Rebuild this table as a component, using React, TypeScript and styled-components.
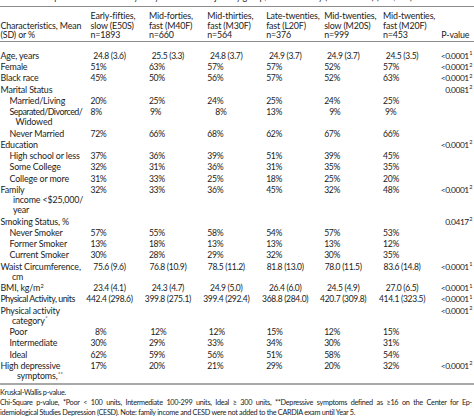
import React from "react";
import styled, { createGlobalStyle } from "styled-components";

const Global = createGlobalStyle`
  html, body { margin: 0; padding: 0; background: #fff; }
  body { overflow: hidden; }
`;

const COLS = "90.5px 58.4px 58.4px 58.9px 58px 58.9px 58.3px minmax(0, 1fr)";

const Page = styled.div`
  width: 474px;
  height: 416px;
  overflow: hidden;
  font-family: Lato, "Open Sans", sans-serif;
  font-size: 8.9px;
  letter-spacing: -0.15px;
  color: #222;
`;

const Title = styled.div`
  margin-top: -8.5px;
  padding: 0 0 4.5px 0;
  line-height: 10px;
  white-space: nowrap;
`;

const HeadRow = styled.div`
  display: grid;
  grid-template-columns: ${COLS};
  align-items: end;
  padding: 4px 0 1px;
  border-top: 1px solid #8c8c8c;
  border-bottom: 1px solid #8c8c8c;
  line-height: 9.7px;
`;

const HeadCell = styled.div<{ $pad?: number }>`
  padding-left: ${(p) => p.$pad ?? 0}px;
  white-space: nowrap;
`;

const Body = styled.div`
  padding: 8.4px 0 1.5px;
  border-bottom: 2px solid #a8a8a8;
`;

const Row = styled.div`
  display: grid;
  grid-template-columns: ${COLS};
  align-items: start;
  padding: 0.48px 0;
  line-height: 10.3px;
`;

const Label = styled.div`
  white-space: nowrap;
`;

const Line = styled.span<{ $indent: number; $tight?: boolean }>`
  display: block;
  padding-left: ${(p) => p.$indent}px;
  letter-spacing: ${(p) => (p.$tight ? "-0.5px" : "inherit")};
`;

const Pct = styled.div<{ $shift: number }>`
  padding-left: ${(p) => p.$shift}px;
  white-space: nowrap;
  font-size: 8.6px;
  letter-spacing: -0.3px;
`;

const Mean = styled.div`
  width: 38px;
  display: flex;
  justify-content: center;
  white-space: nowrap;
  font-size: 8.5px;
  letter-spacing: -0.3px;
`;

const PCell = styled.div`
  display: flex;
  justify-content: flex-end;
  padding-right: 1.5px;
  white-space: nowrap;
  font-size: 8.4px;
  letter-spacing: -0.45px;
`;

const Sup = styled.sup`
  font-size: 5.6px;
  line-height: 0;
  vertical-align: 3.5px;
  margin-left: 0.5px;
  letter-spacing: 0;
`;

const Notes = styled.div`
  padding-top: 3px;
  font-size: 7.3px;
  letter-spacing: -0.3px;
  line-height: 9.7px;
`;

const NoteLine = styled.div<{ $full?: boolean }>`
  white-space: nowrap;
  text-align: ${(p) => (p.$full ? "justify" : "left")};
  text-align-last: ${(p) => (p.$full ? "justify" : "left")};
  padding-right: ${(p) => (p.$full ? 2 : 0)}px;
`;

type LabelLine = { text: React.ReactNode; indent: number; tight?: boolean };
type RowData = {
  label: LabelLine[];
  vals?: string[];
  mean?: boolean;
  shifts?: number[];
  p?: string;
  sup?: string;
};

const L = (text: React.ReactNode, indent = 0.5, tight = false): LabelLine => ({ text, indent, tight });

const rows: RowData[] = [
  { label: [L("Age, years")], mean: true, vals: ["24.8 (3.6)", "25.5 (3.3)", "24.8 (3.7)", "24.9 (3.7)", "24.9 (3.7)", "24.5 (3.5)"], p: "<0.0001", sup: "1" },
  { label: [L("Female")], vals: ["51%", "63%", "57%", "57%", "52%", "57%"], p: "<0.0001", sup: "2" },
  { label: [L("Black race")], vals: ["45%", "50%", "56%", "57%", "52%", "63%"], p: "<0.0001", sup: "2" },
  { label: [L("Marital Status")], p: "0.0081", sup: "2" },
  { label: [L("Married/Living", 9.5)], vals: ["20%", "25%", "24%", "25%", "24%", "25%"] },
  { label: [L("Separated/Divorced/", 9.5, true), L("Widowed", 15.5)], vals: ["8%", "9%", "8%", "13%", "9%", "9%"], shifts: [0, 1, 8, 0, 5, 2] },
  { label: [L("Never Married", 9.5)], vals: ["72%", "66%", "68%", "62%", "67%", "66%"] },
  { label: [L("Education")], p: "<0.0001", sup: "2" },
  { label: [L("High school or less", 9.5)], vals: ["37%", "36%", "39%", "51%", "39%", "45%"] },
  { label: [L("Some College", 9.5)], vals: ["32%", "31%", "36%", "31%", "35%", "35%"] },
  { label: [L("College or more", 9.5)], vals: ["31%", "33%", "25%", "18%", "25%", "20%"] },
  { label: [L("Family"), L("income <$25,000/", 13), L("year", 13)], vals: ["32%", "33%", "36%", "45%", "32%", "48%"], p: "<0.0001", sup: "2" },
  { label: [L("Smoking Status, %")], p: "0.0417", sup: "2" },
  { label: [L("Never Smoker", 9.5)], vals: ["57%", "55%", "58%", "54%", "57%", "53%"] },
  { label: [L("Former Smoker", 9.5)], vals: ["13%", "18%", "13%", "13%", "13%", "12%"] },
  { label: [L("Current Smoker", 9.5)], vals: ["30%", "28%", "29%", "32%", "30%", "35%"] },
  { label: [L("Waist Circumference,"), L("cm", 12)], mean: true, vals: ["75.6 (9.6)", "76.8 (10.9)", "78.5 (11.2)", "81.8 (13.0)", "78.0 (11.5)", "83.6 (14.8)"], p: "<0.0001", sup: "1" },
  { label: [L(<>BMI, kg/m<Sup>2</Sup></>)], mean: true, vals: ["23.4 (4.1)", "24.3 (4.7)", "24.9 (5.0)", "26.4 (6.0)", "24.5 (4.9)", "27.0 (6.5)"], p: "<0.0001", sup: "1" },
  { label: [L("Physical Activity, units", 0.5, true)], mean: true, vals: ["442.4 (298.6)", "399.8 (275.1)", "399.4 (292.4)", "368.8 (284.0)", "420.7 (309.8)", "414.1 (323.5)"], p: "<0.0001", sup: "1" },
  { label: [L("Physical activity"), L(<>category<Sup>*</Sup></>, 12)], p: "<0.0001", sup: "2" },
  { label: [L("Poor", 9.5)], vals: ["8%", "12%", "12%", "15%", "12%", "15%"], shifts: [4.5, 1.5, 1.5, 0.5, 0, 0] },
  { label: [L("Intermediate", 9.5)], vals: ["30%", "29%", "33%", "34%", "30%", "31%"] },
  { label: [L("Ideal", 9.5)], vals: ["62%", "59%", "56%", "51%", "58%", "54%"] },
  { label: [L("High depressive"), L(<>symptoms,<Sup>**</Sup></>, 17)], vals: ["17%", "20%", "21%", "29%", "20%", "32%"], p: "<0.0001", sup: "2" },
];

const heads = [
  ["Early-fifties,", "slow (E50S)", "n=1893"],
  ["Mid-forties,", "fast (M40F)", "n=660"],
  ["Mid-thirties,", "fast (M30F)", "n=564"],
  ["Late-twenties,", "fast (L20F)", "n=376"],
  ["Mid-twenties,", "slow (M20S)", "n=999"],
  ["Mid-twenties,", "fast (M20F)", "n=453"],
];

export default function App() {
  return (
    <Page>
      <Global />
      <Title>
        Table 2. Participant characteristics by body mass index trajectory group, CARDIA study (1985–1986) (n=5,115)
      </Title>
      <HeadRow>
        <HeadCell $pad={0.5}>
          Characteristics, Mean
          <br />
          (SD) or %
        </HeadCell>
        {heads.map((h, i) => (
          <HeadCell key={i}>
            {h[0]}
            <br />
            {h[1]}
            <br />
            {h[2]}
          </HeadCell>
        ))}
        <HeadCell>P-value</HeadCell>
      </HeadRow>
      <Body>
        {rows.map((r, i) => (
          <Row key={i}>
            <Label>
              {r.label.map((l, j) => (
                <Line key={j} $indent={l.indent} $tight={l.tight}>
                  {l.text}
                </Line>
              ))}
            </Label>
            {Array.from({ length: 6 }).map((_, k) => {
              const v = r.vals?.[k];
              if (!v) return <div key={k} />;
              return r.mean ? (
                <Mean key={k}>{v}</Mean>
              ) : (
                <Pct key={k} $shift={r.shifts?.[k] ?? 0}>
                  {v}
                </Pct>
              );
            })}
            <PCell>
              {r.p && (
                <span>
                  {r.p}
                  <Sup>{r.sup}</Sup>
                </span>
              )}
            </PCell>
          </Row>
        ))}
      </Body>
      <Notes>
        <NoteLine>Kruskal-Wallis p-value.</NoteLine>
        <NoteLine $full>
          Chi-Square p-value, *Poor &lt; 100 units, Intermediate 100-299 units, Ideal ≥ 300 units, **Depressive symptoms defined as ≥16 on the Center for Ep-
        </NoteLine>
        <NoteLine>
          idemiological Studies Depression (CESD). Note: family income and CESD were not added to the CARDIA exam until Year 5.
        </NoteLine>
      </Notes>
    </Page>
  );
}
